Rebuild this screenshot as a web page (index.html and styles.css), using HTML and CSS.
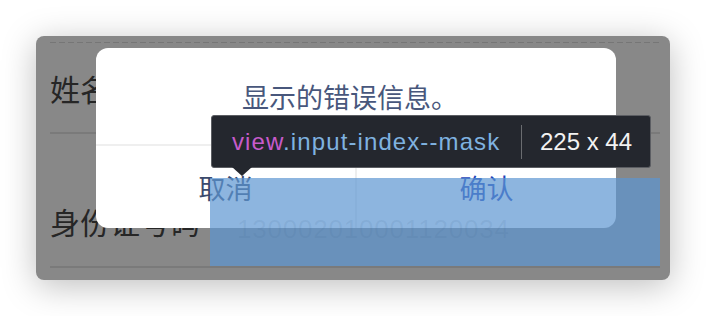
FILE: index.html
```html
<!DOCTYPE html>
<html lang="zh">
<head>
<meta charset="utf-8">
<title>Modal</title>
<link rel="stylesheet" href="styles.css">
</head>
<body>
<div class="stage">
  <div class="panel">
    <div class="dash"></div>
    <div class="row row-name">
      <span class="label">姓名</span>
      <span class="placeholder">李国强</span>
    </div>
    <div class="divider"></div>
    <div class="row row-id">
      <span class="label">身份证号码</span>
    </div>
    <div class="divider"></div>
  </div>

  <div class="modal">
    <div class="modal-title">显示的错误信息。</div>
    <div class="modal-actions">
      <div class="btn btn-cancel">取消</div>
      <div class="btn btn-ok">确认</div>
    </div>
  </div>

  <div class="id-value">130002010001120034</div>

  <div class="highlight"></div>

  <div class="tip">
    <div class="tip-sel"><span class="tip-tag">view</span><span class="tip-cls">.input-index--mask</span></div>
    <div class="tip-sep"></div>
    <div class="tip-size">225 x 44</div>
    <div class="tip-arrow"></div>
  </div>
</div>
</body>
</html>
```
FILE: styles.css
```css
html, body {
  margin: 0;
  padding: 0;
  background: #ffffff;
}

.stage {
  position: relative;
  width: 706px;
  height: 316px;
  padding: 36px 0 0 36px;
  box-sizing: border-box;
  font-family: "Noto Sans CJK SC", "Noto Sans", sans-serif;
}

.panel {
  width: 634px;
  height: 244px;
  box-sizing: border-box;
  padding: 6px 10px 0 14px;
  background: #888888;
  border-radius: 8px;
  box-shadow: 0 6px 34px rgba(0, 0, 0, 0.26);
  display: flex;
  flex-direction: column;
}

.dash {
  height: 1px;
  background: repeating-linear-gradient(90deg, #767676 0 6px, transparent 6px 9px);
}

.row {
  display: flex;
  align-items: center;
}

.row-name {
  height: 89px;
}

.row-id {
  height: 132px;
  align-items: flex-start;
  padding-top: 72px;
  box-sizing: border-box;
}

.label {
  font-size: 30px;
  line-height: 30px;
  color: #262626;
}

.placeholder {
  margin-left: 60px;
  font-size: 26px;
  color: #f4f4f4;
}

.divider {
  height: 2px;
  background: #7a7a7a;
}

.modal {
  position: absolute;
  left: 96px;
  top: 48px;
  width: 520px;
  height: 180px;
  background: #ffffff;
  border-radius: 12px;
  display: flex;
  flex-direction: column;
  z-index: 2;
}

.modal-title {
  height: 98px;
  box-sizing: border-box;
  border-bottom: 2px solid #efefef;
  display: flex;
  align-items: center;
  justify-content: center;
  padding-right: 12px;
  font-size: 27px;
  color: #48577c;
}

.modal-actions {
  flex: 1;
  display: flex;
}

.btn {
  flex: 1;
  display: flex;
  align-items: center;
  justify-content: center;
  font-size: 27px;
}

.btn-cancel {
  color: #3b4a6c;
  border-right: 2px solid #eeeeee;
}

.btn-ok {
  color: #1f45b8;
}

.id-value {
  position: absolute;
  left: 237px;
  top: 214px;
  z-index: 3;
  font-family: "Liberation Sans", sans-serif;
  font-size: 26px;
  letter-spacing: 0.8px;
  color: rgba(0, 0, 0, 0.13);
}

.highlight {
  position: absolute;
  left: 210px;
  top: 178px;
  width: 450px;
  height: 88px;
  background: rgba(93, 150, 210, 0.7);
  z-index: 4;
}

.tip {
  position: absolute;
  left: 211px;
  top: 115px;
  width: 440px;
  height: 53px;
  box-sizing: border-box;
  background: #24272e;
  border: 1px solid #5c5e63;
  border-radius: 3px;
  display: flex;
  align-items: center;
  padding-left: 20px;
  font-family: "Liberation Sans", sans-serif;
  font-size: 24px;
  z-index: 5;
}

.tip-sel {
  letter-spacing: 1.1px;
}

.tip-tag {
  color: #c75bcb;
}

.tip-cls {
  color: #7fb2e0;
}

.tip-sep {
  width: 1px;
  height: 34px;
  margin-left: auto;
  background: #6a6c70;
}

.tip-size {
  width: 128px;
  text-align: center;
  color: #f2f2f2;
}

.tip-arrow {
  position: absolute;
  left: 20px;
  bottom: -9px;
  width: 0;
  height: 0;
  border-left: 10px solid transparent;
  border-right: 10px solid transparent;
  border-top: 9px solid #24272e;
}
```
